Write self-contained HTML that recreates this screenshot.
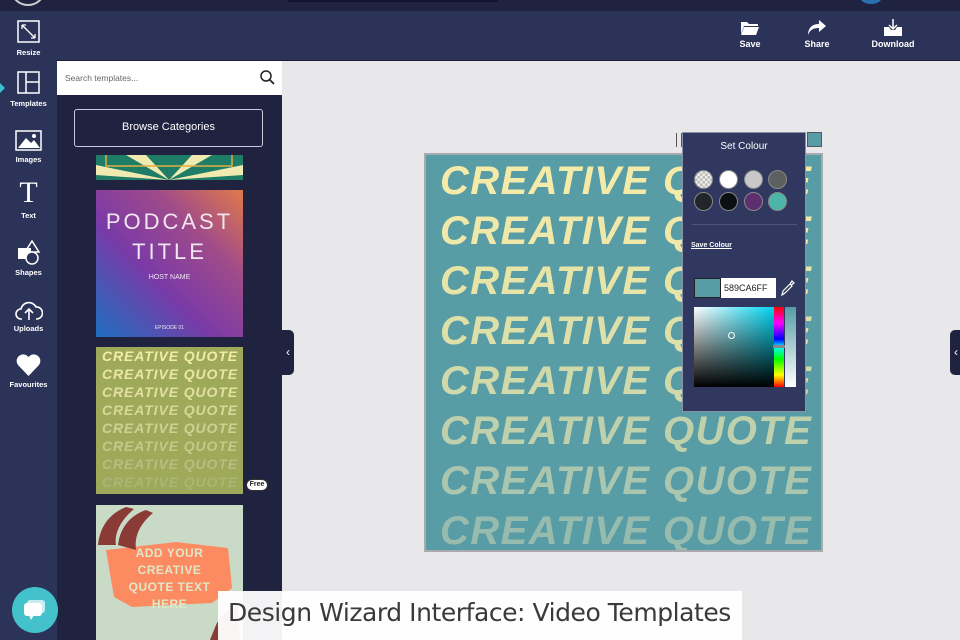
<!DOCTYPE html>
<html><head><meta charset="utf-8"><style>
*{margin:0;padding:0;box-sizing:border-box}
body{width:960px;height:640px;overflow:hidden;position:relative;background:#e8e8ea;font-family:"Liberation Sans",sans-serif}
.abs{position:absolute}
.top{left:0;top:0;width:960px;height:11px;background:#20233f}
.hdr{left:0;top:11px;width:960px;height:50px;background:#2c3358;border-bottom:1px solid #1b1e38}
.side{left:0;top:11px;width:57px;height:629px;background:#2c3358}
.panel{left:57px;top:61px;width:225px;height:579px;background:#20233f}
.lab{color:#fff;font-size:7.5px;font-weight:bold;text-align:center;width:57px;left:0}
.hl{color:#fff;font-size:9px;font-weight:bold;text-align:center}
.cq{position:absolute;left:14px;font-size:40px;font-weight:bold;font-style:italic;letter-spacing:1.4px;white-space:nowrap;line-height:1}
.sq{position:absolute;left:6px;font-size:14px;font-weight:bold;font-style:italic;white-space:nowrap;line-height:1;letter-spacing:.9px}
.sw{position:absolute;width:19px;height:19px;border-radius:50%;border:1.5px solid #888}
</style></head><body>
<div class="abs top"></div>
<div class="abs" style="left:288px;top:0;width:210px;height:2px;background:#111430"></div>
<div class="abs" style="left:10px;top:-30px;width:36px;height:36px;border-radius:50%;border:2px solid #ccc"></div>
<div class="abs" style="left:860px;top:-10px;width:22px;height:14px;border-radius:50%;background:#2a6fb0"></div>
<div class="abs hdr"></div>
<div class="abs side"></div>
<div class="abs panel"></div>

<svg class="abs" style="left:740px;top:20px" width="20" height="16" viewBox="0 0 20 16"><path d="M1 2h6l2 2h9v2H4L1 14z" fill="#fff"/><path d="M4 7h15l-3 8H1z" fill="#fff"/></svg>
<div class="abs hl" style="left:730px;top:39px;width:40px">Save</div>
<svg class="abs" style="left:807px;top:19px" width="20" height="17" viewBox="0 0 20 17"><path d="M12 1l7 6-7 6V9C6 9 3 11 1 16 1 9 5 5 12 5z" fill="#fff"/></svg>
<div class="abs hl" style="left:797px;top:39px;width:40px">Share</div>
<svg class="abs" style="left:882px;top:18px" width="22" height="19" viewBox="0 0 22 19"><path d="M11 1v9M7 7l4 4 4-4" stroke="#fff" stroke-width="1.5" fill="none"/><path d="M2 9h5l2 3h4l2-3h5v9H2z" fill="#fff"/></svg>
<div class="abs hl" style="left:867px;top:39px;width:52px">Download</div>

<svg class="abs" style="left:17px;top:20px" width="23" height="23" viewBox="0 0 23 23"><rect x="1" y="1" width="21" height="21" fill="none" stroke="#fff" stroke-width="1.5"/><path d="M5 5l13 13M5 5h4M5 5v4M18 18h-4M18 18v-4" stroke="#fff" stroke-width="1.3" fill="none"/></svg>
<div class="abs lab" style="top:48px">Resize</div>
<div class="abs" style="left:0;top:83px;width:0;height:0;border-top:5px solid transparent;border-bottom:5px solid transparent;border-left:5px solid #3cc2cf"></div>
<svg class="abs" style="left:17px;top:71px" width="23" height="23" viewBox="0 0 23 23"><rect x="1" y="1" width="21" height="21" fill="none" stroke="#fff" stroke-width="1.5"/><path d="M9 1v21M9 11h13" stroke="#fff" stroke-width="1.5"/></svg>
<div class="abs lab" style="top:99px">Templates</div>
<svg class="abs" style="left:15px;top:130px" width="27" height="21" viewBox="0 0 27 21"><rect x="1" y="1" width="25" height="19" fill="none" stroke="#fff" stroke-width="1.5"/><path d="M3 18l8-10 5 5 3-3 6 8z" fill="#fff"/><circle cx="19" cy="6" r="2" fill="#fff"/></svg>
<div class="abs lab" style="top:155px">Images</div>
<div class="abs" style="left:0;top:178px;width:57px;text-align:center;color:#fff;font-family:'Liberation Serif',serif;font-size:30px;line-height:30px">T</div>
<div class="abs lab" style="top:211px">Text</div>
<svg class="abs" style="left:17px;top:240px" width="24" height="26" viewBox="0 0 24 26"><rect x="1" y="8" width="13" height="11" fill="#fff"/><path d="M15 1l7 11h-14z" fill="none" stroke="#fff" stroke-width="1.5"/><circle cx="15" cy="18" r="6" fill="#2c3358" stroke="#fff" stroke-width="1.5"/></svg>
<div class="abs lab" style="top:268px">Shapes</div>
<svg class="abs" style="left:15px;top:299px" width="28" height="22" viewBox="0 0 28 22"><path d="M7 20H6a5 5 0 010-10 8 8 0 0115-2 6 6 0 011 12h-1" fill="none" stroke="#fff" stroke-width="1.6"/><path d="M14 21V11M10 14l4-4 4 4" stroke="#fff" stroke-width="1.6" fill="none"/></svg>
<div class="abs lab" style="top:324px">Uploads</div>
<svg class="abs" style="left:16px;top:354px" width="25" height="22" viewBox="0 0 25 22"><path d="M12.5 22L2 11A6 6 0 0112.5 3 6 6 0 0123 11z" fill="#fff"/></svg>
<div class="abs lab" style="top:380px">Favourites</div>

<div class="abs" style="left:57px;top:61px;width:225px;height:34px;background:#fff"></div>
<div class="abs" style="left:65px;top:73px;font-size:8.5px;color:#666">Search templates...</div>
<svg class="abs" style="left:260px;top:70px" width="15" height="15" viewBox="0 0 15 15"><circle cx="6" cy="6" r="5" fill="none" stroke="#222" stroke-width="1.5"/><path d="M9.5 9.5l4.5 4.5" stroke="#222" stroke-width="1.8"/></svg>
<div class="abs" style="left:74px;top:109px;width:189px;height:38px;border:1.5px solid #c8cbd8;border-radius:3px;color:#fff;font-size:11px;text-align:center;line-height:35px">Browse Categories</div>

<svg class="abs" style="left:96px;top:155px" width="147" height="25" viewBox="0 0 147 25"><rect width="147" height="25" fill="#1f7c66"/><path d="M30 0l43 25L116 0zM0 10l73 15L0 20zM147 10L73 25l74-5z" fill="#f1eab0"/><path d="M50 0l23 25L96 0z" fill="#1f7c66"/><path d="M10 0v11h126V0" stroke="#e0b040" stroke-width="1.5" fill="none"/></svg>
<div class="abs" style="left:96px;top:190px;width:147px;height:147px;background:linear-gradient(45deg,#1e6fc0 0%,#7a3aa6 40%,#a04b8a 70%,#e07a4a 100%)"></div>
<div class="abs" style="left:96px;top:207px;width:147px;text-align:center;color:#f0e6f0;font-size:22px;letter-spacing:3px;line-height:30px">PODCAST<br>TITLE</div>
<div class="abs" style="left:96px;top:274px;width:147px;text-align:center;color:#f0e6f0;font-size:7px">HOST NAME</div>
<div class="abs" style="left:96px;top:325px;width:147px;text-align:center;color:#f0e6f0;font-size:5px">EPISODE 01</div>
<div class="abs" style="left:96px;top:347px;width:147px;height:147px;background:#9ea95a;overflow:hidden">
<div class="sq" style="top:2px;color:#f1ecaa">CREATIVE QUOTE</div>
<div class="sq" style="top:20px;color:#ebe6a6">CREATIVE QUOTE</div>
<div class="sq" style="top:38px;color:#e2e0a0">CREATIVE QUOTE</div>
<div class="sq" style="top:56px;color:#d8d89a">CREATIVE QUOTE</div>
<div class="sq" style="top:74px;color:#ced193">CREATIVE QUOTE</div>
<div class="sq" style="top:92px;color:#c3c98a">CREATIVE QUOTE</div>
<div class="sq" style="top:110px;color:#b6bf80">CREATIVE QUOTE</div>
<div class="sq" style="top:128px;color:#aab576">CREATIVE QUOTE</div>
</div>
<div class="abs" style="left:246px;top:479px;width:22px;height:12px;border-radius:6px;background:#fff;border:1px solid #333;font-size:7px;font-weight:bold;text-align:center;line-height:10px;color:#222">Free</div>
<div class="abs" style="left:96px;top:505px;width:147px;height:135px;background:#c9dbc6;overflow:hidden">
<svg width="147" height="135" viewBox="0 0 147 135"><path d="M10 45l70-8 52 6 4 40-20 15-80 4-18-10z" fill="#fc8b62"/><path d="M2 40C4 20 15 8 30 2l8 2C25 15 18 28 20 40zM22 40C24 22 35 10 50 5l7 3C45 18 38 30 40 45z" fill="#8a3b35"/><path d="M120 120c5-10 15-18 22-20l2 35h-30z" fill="#8a3b35"/></svg>
</div>
<div class="abs" style="left:96px;top:545px;width:147px;text-align:center;color:#dfe8c8;font-size:12px;font-weight:bold;line-height:17px;letter-spacing:.5px">ADD YOUR<br>CREATIVE<br>QUOTE TEXT<br>HERE</div>

<div class="abs" style="left:282px;top:330px;width:12px;height:45px;background:#20233f;border-radius:0 5px 5px 0;color:#fff;font-size:12px;line-height:45px;text-align:center">‹</div>
<div class="abs" style="left:950px;top:330px;width:12px;height:45px;background:#20233f;border-radius:5px 0 0 5px;color:#fff;font-size:12px;line-height:45px;text-align:center">‹</div>

<div class="abs" style="left:12px;top:587px;width:46px;height:46px;border-radius:50%;background:#43c2cb"></div>
<svg class="abs" style="left:23px;top:599px" width="24" height="22" viewBox="0 0 24 22"><rect x="4" y="1" width="18" height="13" rx="3" fill="#fff" opacity=".7"/><rect x="1" y="4" width="18" height="13" rx="3" fill="#fff"/><path d="M6 16l2 5 3-5z" fill="#fff"/></svg>

<div class="abs" style="left:424px;top:153px;width:399px;height:399px;background:#589ca6;border:2px solid #a8aab0;overflow:hidden">
<div class="cq" style="top:6px;color:#f5eba8">CREATIVE QUOTE</div>
<div class="cq" style="top:56px;color:#efe8a8">CREATIVE QUOTE</div>
<div class="cq" style="top:106px;color:#e7e4a8">CREATIVE QUOTE</div>
<div class="cq" style="top:156px;color:#dde0a8">CREATIVE QUOTE</div>
<div class="cq" style="top:206px;color:#cfd9aa">CREATIVE QUOTE</div>
<div class="cq" style="top:256px;color:#bfd0ac">CREATIVE QUOTE</div>
<div class="cq" style="top:306px;color:#aac6ae">CREATIVE QUOTE</div>
<div class="cq" style="top:356px;color:#97bcae">CREATIVE QUOTE</div>
</div>
<div class="abs" style="left:807px;top:132px;width:15px;height:15px;background:#589ca6;border:1px solid #556"></div>
<div class="abs" style="left:676px;top:133px;width:6px;height:14px;border-left:1px solid #555;border-right:1px solid #555"></div>

<div class="abs" style="left:682px;top:132px;width:124px;height:280px;background:#30385f;border:1px solid #8a90a8"></div>
<div class="abs" style="left:682px;top:141px;width:124px;text-align:center;color:#fff;font-size:10px">Set Colour</div>
<div class="sw" style="left:694px;top:170px;background:repeating-conic-gradient(#bbb 0 25%,#eee 0 50%) 0 0/5px 5px"></div>
<div class="sw" style="left:719px;top:170px;background:#fff"></div>
<div class="sw" style="left:744px;top:170px;background:#c8c8c8"></div>
<div class="sw" style="left:768px;top:170px;background:#5e6060"></div>
<div class="sw" style="left:694px;top:192px;background:#22262a"></div>
<div class="sw" style="left:719px;top:192px;background:#0c1010"></div>
<div class="sw" style="left:744px;top:192px;background:#5d2f6e"></div>
<div class="sw" style="left:768px;top:192px;background:#4ab5a8"></div>
<div class="abs" style="left:692px;top:224px;width:105px;height:1px;background:#4c5478"></div>
<div class="abs" style="left:691px;top:242px;color:#fff;font-size:7px;font-weight:bold;text-decoration:underline">Save Colour</div>
<div class="abs" style="left:694px;top:278px;width:27px;height:20px;background:#589ca6;border:1px solid #222"></div>
<div class="abs" style="left:721px;top:278px;width:55px;height:20px;background:#fff;font-size:9px;line-height:20px;padding-left:3px;color:#222">589CA6FF</div>
<svg class="abs" style="left:780px;top:279px" width="16" height="18" viewBox="0 0 16 18"><path d="M2 16l1-4 7-7 2 2-7 7zM10 5l2-3 2 2-3 2" fill="none" stroke="#fff" stroke-width="1.2"/></svg>
<div class="abs" style="left:694px;top:307px;width:80px;height:80px;background:linear-gradient(to top,#000,rgba(0,0,0,0)),linear-gradient(to right,#fff,#00d4ef)"></div>
<div class="abs" style="left:728px;top:332px;width:7px;height:7px;border-radius:50%;border:1.5px solid #fff"></div>
<div class="abs" style="left:774px;top:307px;width:10px;height:80px;background:linear-gradient(#f00,#f0f 20%,#00f 40%,#0ff 50%,#0f0 65%,#ff0 85%,#f00)"></div>
<div class="abs" style="left:773px;top:345px;width:12px;height:3px;background:#888"></div>
<div class="abs" style="left:785px;top:307px;width:11px;height:80px;background:linear-gradient(#589ca6,#fff)"></div>

<div class="abs" style="left:218px;top:591px;width:524px;height:49px;background:rgba(255,255,255,.95)"></div>
<div class="abs" style="left:228px;top:598px;font-size:25px;color:#3a3a3a;font-family:'DejaVu Sans','Liberation Sans',sans-serif;letter-spacing:-0.45px;white-space:nowrap">Design Wizard Interface: Video Templates</div>
</body></html>
